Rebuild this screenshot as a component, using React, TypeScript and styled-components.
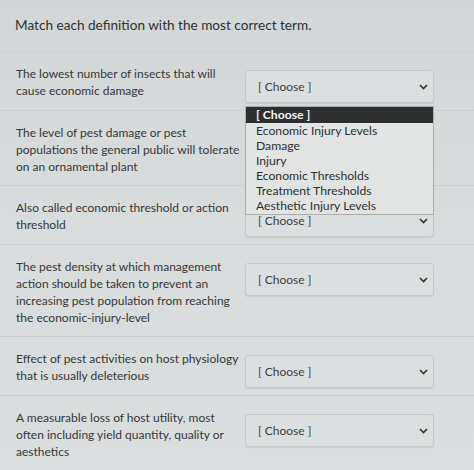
import React from "react";
import styled, { createGlobalStyle } from "styled-components";

type Question = {
  lines: string[];
  open?: boolean;
};

const questions: Question[] = [
  { lines: ["The lowest number of insects that will", "cause economic damage"], open: true },
  {
    lines: [
      "The level of pest damage or pest",
      "populations the general public will tolerate",
      "on an ornamental plant",
    ],
  },
  { lines: ["Also called economic threshold or action", "threshold"] },
  {
    lines: [
      "The pest density at which management",
      "action should be taken to prevent an",
      "increasing pest population from reaching",
      "the economic-injury-level",
    ],
  },
  { lines: ["Effect of pest activities on host physiology", "that is usually deleterious"] },
  {
    lines: [
      "A measurable loss of host utility, most",
      "often including yield quantity, quality or",
      "aesthetics",
    ],
  },
];

const options = [
  "[ Choose ]",
  "Economic Injury Levels",
  "Damage",
  "Injury",
  "Economic Thresholds",
  "Treatment Thresholds",
  "Aesthetic Injury Levels",
];

const GlobalStyle = createGlobalStyle`
  html, body {
    margin: 0;
    padding: 0;
    background: #d5d9d9;
  }
  body {
    font-family: Lato, "Open Sans", sans-serif;
    color: #333638;
  }
`;

const Page = styled.div`
  width: 474px;
  height: 470px;
  overflow: hidden;
  background: linear-gradient(180deg, #d2d6d6 0%, #d8dcdc 45%, #dadede 100%);
`;

const Title = styled.div`
  font-size: 13.6px;
  line-height: 18px;
  padding: 16px 0 17px 15px;
  border-bottom: 1px solid #cbd0d0;
  color: #2f3234;
`;

const Row = styled.div`
  display: grid;
  grid-template-columns: 228px 189px;
  column-gap: 1px;
  align-items: start;
  padding: 13px 0 7px 16px;
  border-bottom: 1px solid #c9cece;
`;

const Label = styled.div`
  font-size: 12px;
  line-height: 17px;
  padding-bottom: 3px;
  white-space: nowrap;
  color: #35383a;
`;

const SelectWrap = styled.div`
  position: relative;
  margin-top: 5px;
`;

const SelectBox = styled.div`
  height: 33px;
  box-sizing: border-box;
  border: 1px solid #c4c9c9;
  border-radius: 3px;
  background: #dcdfdf;
  box-shadow: 0 1px 1px rgba(0, 0, 0, 0.07);
  display: flex;
  align-items: center;
  justify-content: space-between;
  padding: 0 5px 0 12px;
  font-size: 12px;
  color: #3c3f41;
`;

const Chevron = styled.svg`
  width: 9px;
  height: 6px;
`;

const Menu = styled.div`
  position: absolute;
  top: 36px;
  left: 0;
  right: 0;
  z-index: 2;
  background: #e2e4e4;
  border: 1px solid #a9aeae;
  box-sizing: border-box;
`;

const MenuItem = styled.div<{ $active?: boolean }>`
  font-size: 12.2px;
  line-height: 15.1px;
  padding: 0 10px;
  white-space: nowrap;
  color: ${(p) => (p.$active ? "#f4f4f4" : "#2e3133")};
  background: ${(p) => (p.$active ? "#2e2f30" : "transparent")};
  font-weight: ${(p) => (p.$active ? 700 : 400)};
  height: ${(p) => (p.$active ? "16px" : "auto")};
`;

const Select: React.FC<{ open?: boolean }> = ({ open }) => (
  <SelectWrap>
    <SelectBox>
      <span>[ Choose ]</span>
      <Chevron viewBox="0 0 9 6">
        <path d="M1 1 L4.5 4.5 L8 1" fill="none" stroke="#333" strokeWidth="1.6" />
      </Chevron>
    </SelectBox>
    {open && (
      <Menu>
        {options.map((o, i) => (
          <MenuItem key={o} $active={i === 0}>
            {o}
          </MenuItem>
        ))}
      </Menu>
    )}
  </SelectWrap>
);

export default function App() {
  return (
    <Page>
      <GlobalStyle />
      <Title>Match each definition with the most correct term.</Title>
      {questions.map((q) => (
        <Row key={q.lines[0]}>
          <Label>
            {q.lines.map((l, i) => (
              <React.Fragment key={i}>
                {i > 0 && <br />}
                {l}
              </React.Fragment>
            ))}
          </Label>
          <Select open={q.open} />
        </Row>
      ))}
    </Page>
  );
}
